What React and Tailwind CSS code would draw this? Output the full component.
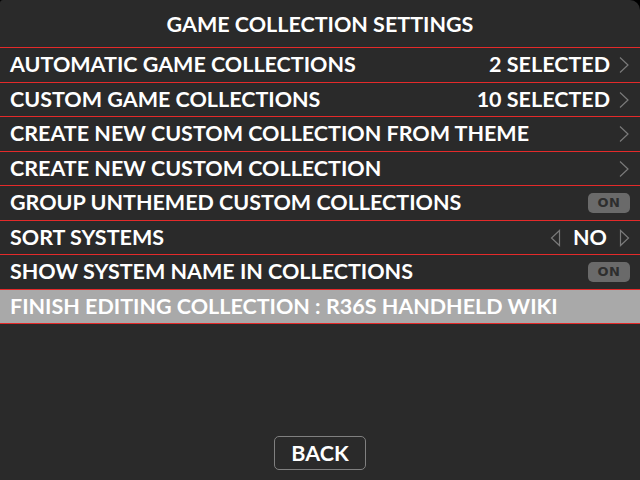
import React from "react";

const font = { fontFamily: "Lato, 'Noto Sans', sans-serif" };

function Chevron() {
  return (
    <svg width="12" height="18" viewBox="0 0 12 18" className="ml-[8px] shrink-0">
      <path d="M2 1.5 L10 9 L2 16.5" fill="none" stroke="#7a7a7a" strokeWidth="1.2" />
    </svg>
  );
}

function TriLeft() {
  return (
    <svg width="11" height="18" viewBox="0 0 11 18" className="shrink-0">
      <path d="M9.5 1.5 L1.5 9 L9.5 16.5 Z" fill="none" stroke="#7a7a7a" strokeWidth="1.2" />
    </svg>
  );
}

function TriRight() {
  return (
    <svg width="11" height="18" viewBox="0 0 11 18" className="shrink-0">
      <path d="M1.5 1.5 L9.5 9 L1.5 16.5 Z" fill="none" stroke="#7a7a7a" strokeWidth="1.2" />
    </svg>
  );
}

function Toggle() {
  return (
    <div
      className="w-[42px] h-[20px] rounded-[5px] bg-[#6a6a6a] flex items-center justify-center text-[#2e2e2e] text-[13px] font-bold tracking-[0.5px]"
      style={{ fontFamily: "'DejaVu Sans', sans-serif" }}
    >
      ON
    </div>
  );
}

function Row({ label, right, selected, last, tall }) {
  return (
    <div
      className={
        "flex items-center pl-[10px] pr-[10px] border-t border-[#e42a2a] " +
        (tall ? "h-[35px] " : "h-[34px] ") +
        (last ? "border-b h-[35px] " : "") +
        (selected ? "bg-[#a9a9a9]" : "")
      }
    >
      <div className="flex-1 text-white text-[21.5px] font-bold leading-none whitespace-nowrap">{label}</div>
      <div className="flex items-center">{right}</div>
    </div>
  );
}

export default function App() {
  return (
    <div className="w-[640px] h-[480px] bg-black">
      <div
        className="w-[640px] h-[480px] bg-[#2a2a2a] rounded-tl-[3px] rounded-tr-[10px] flex flex-col overflow-hidden"
        style={font}
      >
        <div className="h-[47px] flex items-center justify-center text-white text-[21.5px] font-bold pt-[1px]">
          GAME COLLECTION SETTINGS
        </div>
        <div className="flex flex-col">
          <Row
            tall
            label="AUTOMATIC GAME COLLECTIONS"
            right={
              <>
                <span className="text-white text-[21.5px] font-bold leading-none">2 SELECTED</span>
                <Chevron />
              </>
            }
          />
          <Row
            label="CUSTOM GAME COLLECTIONS"
            right={
              <>
                <span className="text-white text-[21.5px] font-bold leading-none">10 SELECTED</span>
                <Chevron />
              </>
            }
          />
          <Row tall label="CREATE NEW CUSTOM COLLECTION FROM THEME" right={<Chevron />} />
          <Row label="CREATE NEW CUSTOM COLLECTION" right={<Chevron />} />
          <Row tall label="GROUP UNTHEMED CUSTOM COLLECTIONS" right={<Toggle />} />
          <Row
            label="SORT SYSTEMS"
            right={
              <>
                <TriLeft />
                <span className="text-white text-[21.5px] font-bold leading-none mx-[12px]">NO</span>
                <TriRight />
              </>
            }
          />
          <Row tall label="SHOW SYSTEM NAME IN COLLECTIONS" right={<Toggle />} />
          <Row label="FINISH EDITING COLLECTION : R36S HANDHELD WIKI" selected last />
        </div>
        <div className="flex-1" />
        <div className="flex justify-center pb-[10px]">
          <div className="w-[92px] h-[34px] border-[1.5px] border-[#808080] rounded-[5px] flex items-center justify-center text-white text-[21.5px] font-bold">
            BACK
          </div>
        </div>
      </div>
    </div>
  );
}
